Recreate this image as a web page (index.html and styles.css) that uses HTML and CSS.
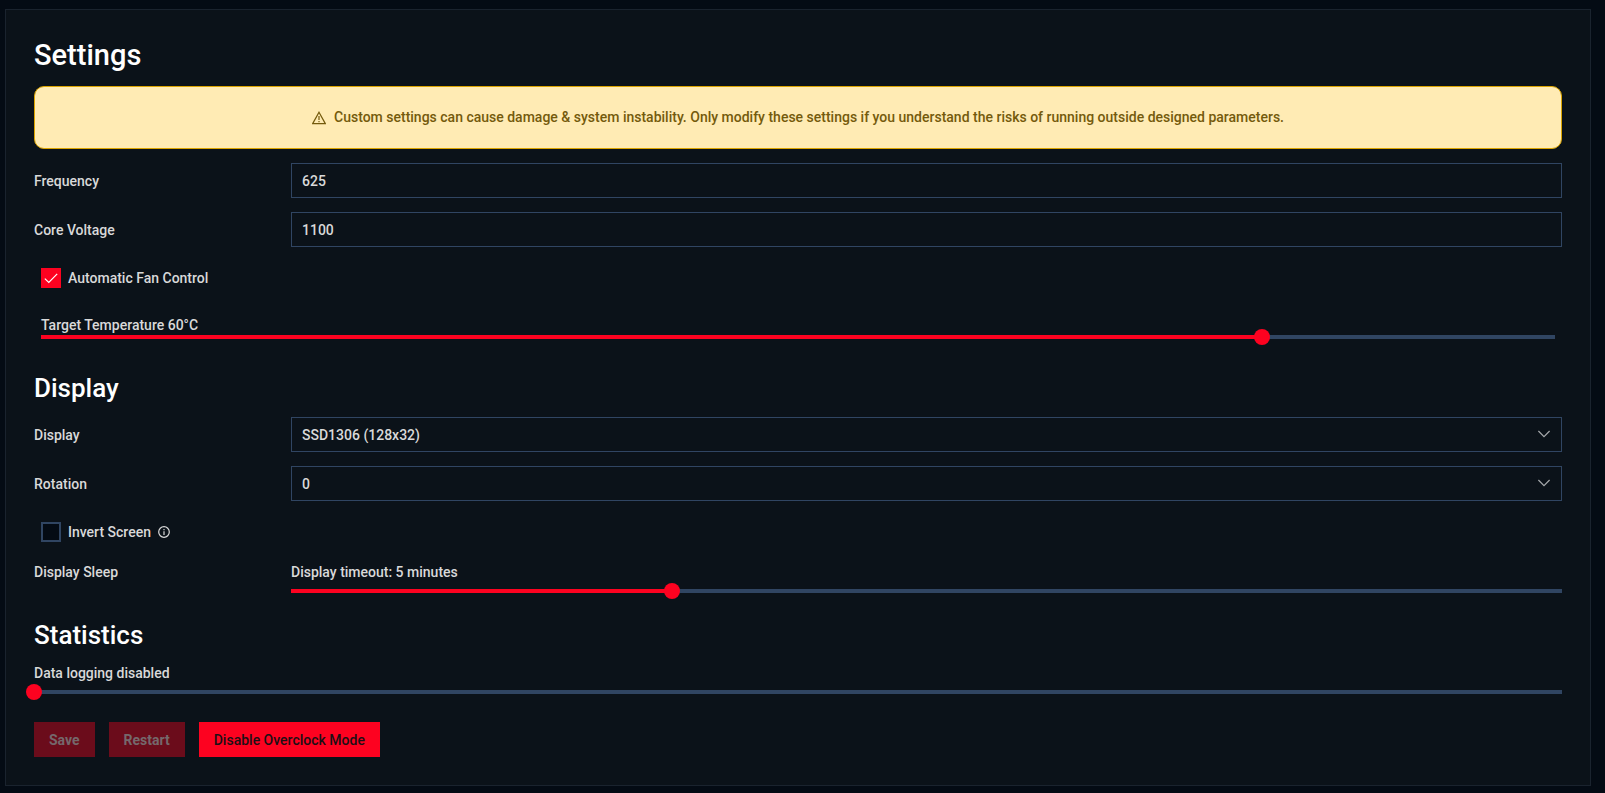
FILE: index.html
```html
<!DOCTYPE html>
<html lang="en">
<head>
    <meta charset="UTF-8">
    <meta name="viewport" content="width=device-width, initial-scale=1.0">
    <title>Settings</title>
    <link rel="stylesheet" href="styles.css">
</head>
<body>
    <form class="card" id="settingsForm">
        <h1>Settings</h1>

        <div class="message" role="alert">
            <svg class="message-icon" viewBox="0 0 14 14" aria-hidden="true">
                <path d="M7 1.3 L13.3 12.6 H0.7 Z M7 5 V9 M7 10 V11.2"/>
            </svg>
            <span>Custom settings can cause damage &amp; system instability. Only modify these settings if you understand the risks of running outside designed parameters.</span>
        </div>

        <div class="field">
            <label for="frequency">Frequency</label>
            <input class="control" type="text" id="frequency" name="frequency" value="625">
        </div>
        <div class="field">
            <label for="coreVoltage">Core Voltage</label>
            <input class="control" type="text" id="coreVoltage" name="coreVoltage" value="1100">
        </div>
        <div class="check-field">
            <span class="checkbox">
                <input type="checkbox" id="autofan" name="autofan" checked>
                <svg viewBox="0 0 14 14" aria-hidden="true"><path d="M0.8 7.6 L4.8 11.4 L13.2 2.8"/></svg>
            </span>
            <label for="autofan">Automatic Fan Control</label>
        </div>
        <div class="slider-field inset">
            <label for="targetTemp">Target Temperature 60°C</label>
            <input class="slider" type="range" id="targetTemp" name="targetTemp" min="35" max="66" value="60" style="--fill: 80.65%">
        </div>

        <!-- Display -->
        <h2>Display</h2>
        <div class="field">
            <label for="display">Display</label>
            <div class="dropdown">
                <select class="control" id="display" name="display">
                    <option>SSD1306 (128x32)</option>
                </select>
                <svg viewBox="0 0 14 14" aria-hidden="true"><path d="M1.4 4 L7 9.6 L12.6 4"/></svg>
            </div>
        </div>
        <div class="field">
            <label for="rotation">Rotation</label>
            <div class="dropdown">
                <select class="control" id="rotation" name="rotation">
                    <option>0</option>
                    <option>90</option>
                    <option>180</option>
                    <option>270</option>
                </select>
                <svg viewBox="0 0 14 14" aria-hidden="true"><path d="M1.4 4 L7 9.6 L12.6 4"/></svg>
            </div>
        </div>
        <div class="check-field">
            <span class="checkbox">
                <input type="checkbox" id="invertScreen" name="invertScreen">
                <svg viewBox="0 0 14 14" aria-hidden="true"><path d="M0.8 7.6 L4.8 11.4 L13.2 2.8"/></svg>
            </span>
            <label for="invertScreen">Invert Screen</label>
            <svg class="info-icon" viewBox="0 0 12 12" aria-hidden="true">
                <circle cx="6" cy="6" r="5.3"/>
                <path d="M6 5.3 V9 M6 3 V4.2"/>
            </svg>
        </div>
        <div class="field top">
            <span>Display Sleep</span>
            <div class="slider-field">
                <label for="displayTimeout">Display timeout: 5 minutes</label>
                <input class="slider" type="range" id="displayTimeout" name="displayTimeout" min="0" max="10" value="3" style="--fill: 30%">
            </div>
        </div>

        <!-- Statistics -->
        <h2>Statistics</h2>
        <div class="slider-field">
            <label for="statsFrequency">Data logging disabled</label>
            <input class="slider" type="range" id="statsFrequency" name="statsFrequency" min="0" max="100" value="0" style="--fill: 0%">
        </div>

        <div class="actions">
            <button class="button" type="submit" disabled>Save</button>
            <button class="button" type="button" disabled>Restart</button>
            <button class="button danger" type="button">Disable Overclock Mode</button>
        </div>
    </form>

    <script>
        // Keep the coloured part of each slider next to its handle
        document.querySelectorAll(".slider").forEach((slider) => {
            slider.addEventListener("input", () => {
                const fill = (slider.value - slider.min) / (slider.max - slider.min) * 100;
                slider.style.setProperty("--fill", `${fill}%`);
            });
        });
    </script>
</body>
</html>
```
FILE: styles.css
```css
* {
    box-sizing: border-box;
}
body {
    margin: 9px 14px 7px 5px;
    background: #040b14;
    color: #d9d9d9;
    font-family: Roboto, "Liberation Sans", sans-serif;
    font-size: 14px;
    font-weight: 500;
    line-height: 18px;
}
h1, h2 {
    color: #fff;
    font-weight: 500;
}
h1 {
    margin: 0 0 14px;
    font-size: 29px;
    line-height: 34px;
}
h2 {
    margin: 27px 0 14px;
    font-size: 26px;
    line-height: 30px;
}
.card {
    padding: 28px;
    background: #0b1219;
    border: 1px solid #1a232e;
}
.message {
    display: flex;
    align-items: center;
    justify-content: center;
    gap: 8px;
    margin-bottom: 14px;
    padding: 20px;
    background: #ffebb4;
    border: 1px solid #dba400;
    border-radius: 10px;
    color: #745a0c;
    line-height: 21px;
}
svg {
    fill: none;
    stroke: currentColor;
    stroke-width: 1.2;
}
.message-icon {
    flex: none;
    width: 14px;
    height: 14px;
}
.field {
    display: grid;
    grid-template-columns: repeat(12, 1fr);
    column-gap: 14px;
    align-items: center;
    margin-bottom: 14px;
}
.field > :first-child {
    grid-column: span 2;
}
.field > :last-child {
    grid-column: span 10;
}
.field.top {
    align-items: start;
    margin-bottom: 0;
}
.control {
    width: 100%;
    height: 35px;
    padding: 0 10px;
    background: #0b1219;
    border: 1px solid #304562;
    border-radius: 0;
    color: inherit;
    font: inherit;
    appearance: none;
}
.dropdown {
    position: relative;
}
.dropdown svg {
    position: absolute;
    top: 10px;
    right: 11px;
    width: 14px;
    height: 14px;
    color: #a5a8ab;
    pointer-events: none;
}
.check-field {
    display: flex;
    align-items: center;
    gap: 7px;
    margin-bottom: 14px;
    padding: 7px;
}
.checkbox {
    position: relative;
    height: 20px;
}
.checkbox input {
    display: block;
    width: 20px;
    height: 20px;
    margin: 0;
    background: #040b14;
    border: 2px solid #304562;
    border-radius: 0;
    appearance: none;
}
.checkbox input:checked {
    background: #fd0220;
    border-color: #fd0220;
}
.checkbox svg {
    display: none;
    position: absolute;
    top: 3px;
    left: 3px;
    width: 14px;
    height: 14px;
    color: #fff;
    pointer-events: none;
}
.checkbox input:checked + svg {
    display: block;
}
.info-icon {
    width: 12px;
    height: 12px;
}
.slider-field label {
    display: block;
}
.slider-field.inset {
    padding: 7px;
}
/* The handle hangs half its width over each end of the track */
.slider {
    display: block;
    width: calc(100% + 16px);
    height: 16px;
    margin: 2px -8px -6px;
    background: linear-gradient(to right, #fd0220 var(--fill), #304562 var(--fill)) center / calc(100% - 16px) 4px no-repeat;
    appearance: none;
}
.inset .slider {
    margin-top: -5px;
}
.slider::-webkit-slider-thumb {
    width: 16px;
    height: 16px;
    background: #fd0220;
    border-radius: 50%;
    appearance: none;
}
.actions {
    display: flex;
    gap: 14px;
    margin-top: 28px;
}
.button {
    height: 35px;
    padding: 0 14px;
    background: #fd0220;
    border: 1px solid #fd0220;
    color: #d9d9d9;
    font: inherit;
    font-weight: 700;
    cursor: pointer;
}
.button:disabled {
    background: #6b0c1b;
    border-color: #6b0c1b;
    color: #75686c;
    cursor: default;
}
.button.danger {
    color: #1a1015;
    font-weight: 500;
}
```
